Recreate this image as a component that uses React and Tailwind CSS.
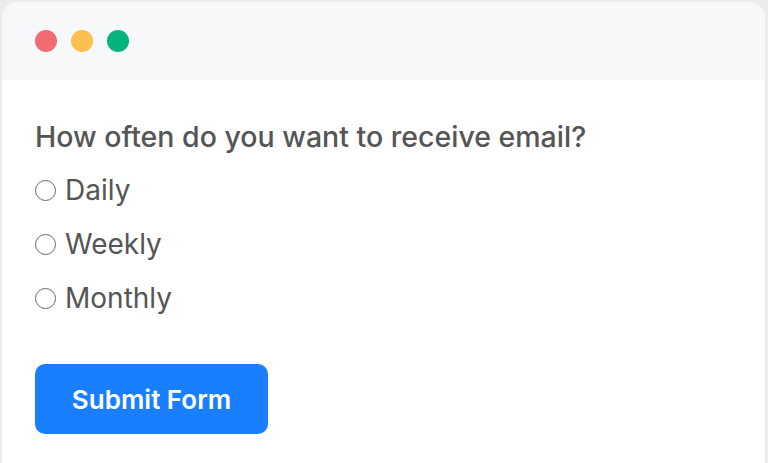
import { useState } from 'react';

const options = ['Daily', 'Weekly', 'Monthly'];

const App = () => {
  const [choice, setChoice] = useState('');

  return (
    <div className="h-[463px] w-[768px] overflow-hidden bg-[#ececec] pt-[2px] pl-[2px] pr-[3px]" style={{ fontFamily: 'Inter, "Noto Sans", sans-serif' }}>
      <div className="h-full rounded-t-[16px] bg-white overflow-hidden">
        <div className="h-[78px] bg-[#f7f8f9] flex items-center gap-[14px] pl-[33px]">
          <span className="w-[22px] h-[22px] rounded-full bg-[#f36b72]" />
          <span className="w-[22px] h-[22px] rounded-full bg-[#fdc04e]" />
          <span className="w-[22px] h-[22px] rounded-full bg-[#05b47d]" />
        </div>
        <form className="pl-[33px] pt-[40px]" onSubmit={(e) => e.preventDefault()}>
          <p className="text-[28.5px] leading-[34px] font-medium text-[#555555]">How often do you want to receive email?</p>
          <div className="mt-[9px] flex flex-col">
            {options.map((opt) => (
              <label key={opt} className="h-[54px] flex items-center gap-[9px] text-[28px] text-[#555555] cursor-pointer">
                <span className="w-[21px] h-[21px] rounded-full border-[1.5px] border-[#666666] bg-white flex items-center justify-center">
                  {choice === opt && <span className="w-[10px] h-[10px] rounded-full bg-[#1a7fff]" />}
                </span>
                <input type="radio" name="freq" value={opt} className="hidden" checked={choice === opt} onChange={() => setChoice(opt)} />
                {opt}
              </label>
            ))}
          </div>
          <button type="submit" className="mt-[39px] w-[233px] h-[70px] rounded-[10px] bg-[#1a7fff] text-white text-[26px] font-semibold">Submit Form</button>
        </form>
      </div>
    </div>
  );
};

export default App;
